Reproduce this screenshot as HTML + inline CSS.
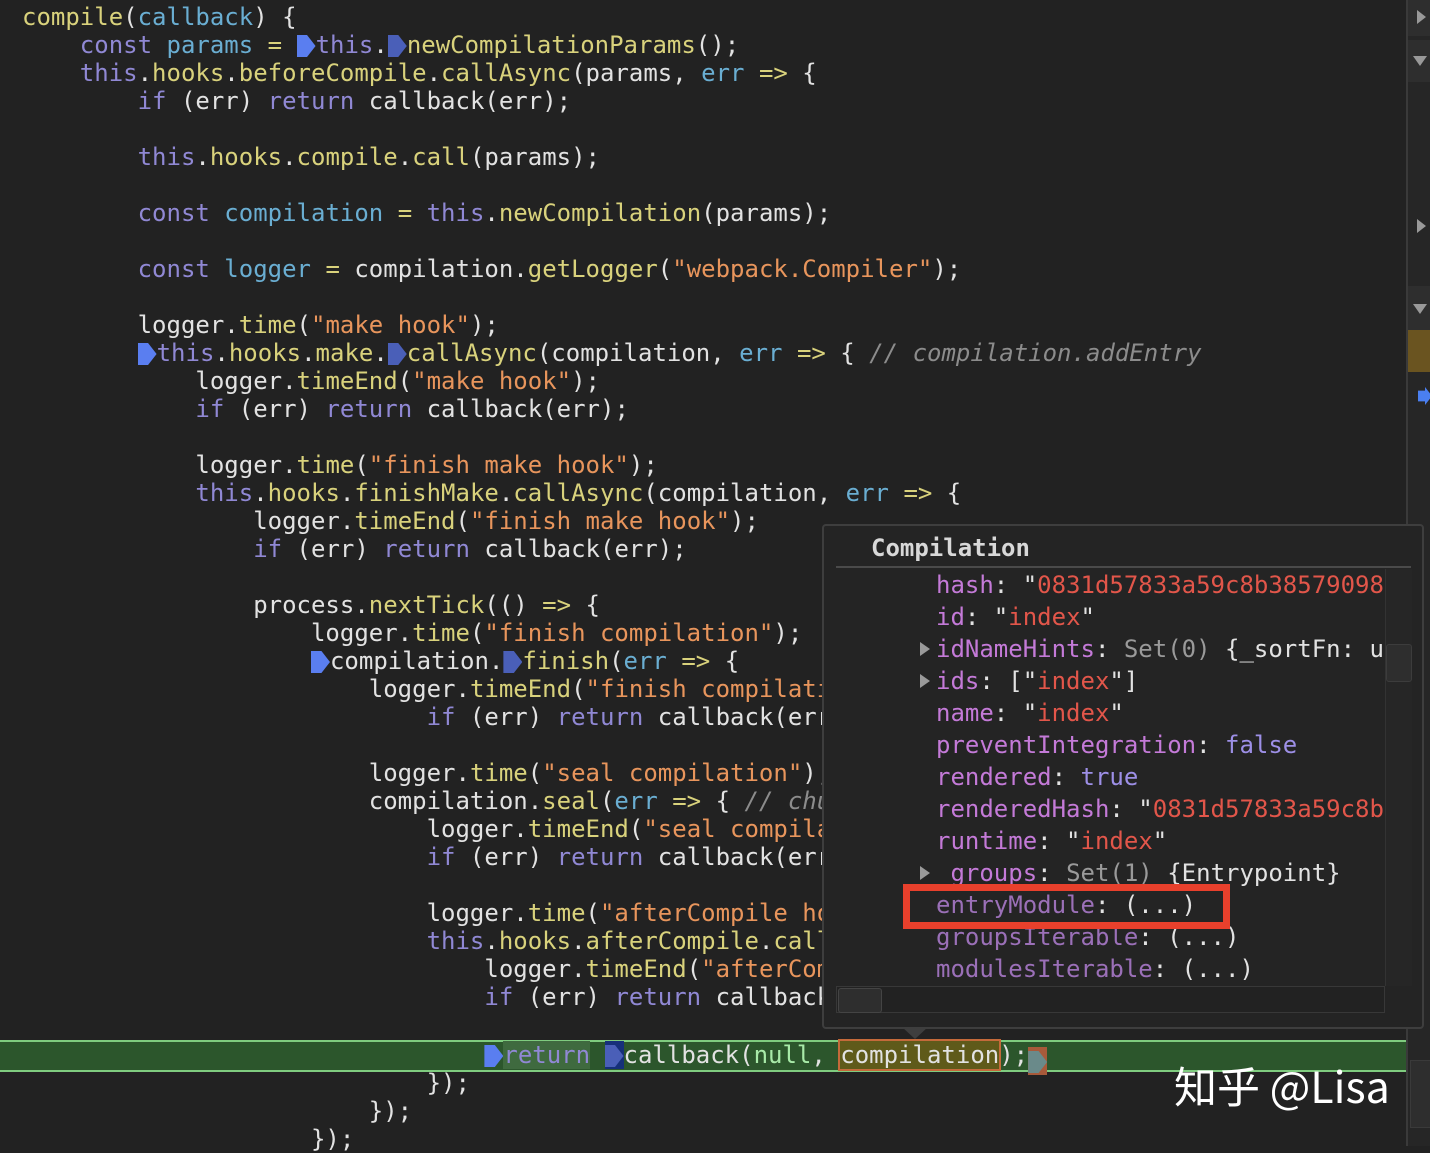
<!DOCTYPE html>
<html><head><meta charset="utf-8"><style>
html,body{margin:0;padding:0}
body{width:1430px;height:1146px;background:#222;position:relative;overflow:hidden;font-family:"DejaVu Sans Mono","Liberation Mono",monospace;font-size:24px;color:#e2e2e2}
.l{position:absolute;left:22px;height:28px;line-height:28px;white-space:pre}
.k{color:#9088d4}.f{color:#d9d27c}.v{color:#6aaed2}.s{color:#e8955c}.c{color:#8c8c8c;font-style:italic}.y{color:#d9d27c}
.m{display:inline-block;width:19px;height:22px;vertical-align:-4px;background:#5a7ef0;clip-path:polygon(0 0,55% 0,100% 50%,55% 100%,0 100%)}
.m2{background:#4a5fb8}
#hl{position:absolute;left:0;top:1040px;width:1406px;height:28px;background:#2c562c;border-top:2px solid #7fcc7f;border-bottom:2px solid #7fcc7f}
#pop{position:absolute;left:822px;top:524px;width:598px;height:501px;background:#242424;border:2px solid #3e3e3e;border-radius:4px;overflow:hidden;z-index:5}
#pop .p{position:absolute;height:32px;line-height:32px;white-space:pre;font-size:24px}
.pk{color:#c47ad8}.pd{color:#9b70b8}.ps{color:#e2564a}.pg{color:#9a9a9a}.pb{color:#9d8fe6}
.tri{position:absolute;width:0;height:0;border-left:10px solid #9a9a9a;border-top:7px solid transparent;border-bottom:7px solid transparent}
#gut{position:absolute;left:1406px;top:0;width:24px;height:1146px;background:#262626;border-left:2px solid #3a3a3a}
</style></head><body>
<div id="hl"></div>
<div class="l" style="top:3px"><span class="f">compile</span>(<span class="v">callback</span>) {</div>
<div class="l" style="top:31px">    <span class="k">const</span> <span class="v">params</span> <span class="y">=</span> <span class="m"></span><span class="k">this</span>.<span class="m m2"></span><span class="f">newCompilationParams</span>();</div>
<div class="l" style="top:59px">    <span class="k">this</span>.<span class="f">hooks</span>.<span class="f">beforeCompile</span>.<span class="f">callAsync</span>(params, <span class="v">err</span> <span class="y">=&gt;</span> {</div>
<div class="l" style="top:87px">        <span class="k">if</span> (err) <span class="k">return</span> callback(err);</div>
<div class="l" style="top:143px">        <span class="k">this</span>.<span class="f">hooks</span>.<span class="f">compile</span>.<span class="f">call</span>(params);</div>
<div class="l" style="top:199px">        <span class="k">const</span> <span class="v">compilation</span> <span class="y">=</span> <span class="k">this</span>.<span class="f">newCompilation</span>(params);</div>
<div class="l" style="top:255px">        <span class="k">const</span> <span class="v">logger</span> <span class="y">=</span> compilation.<span class="f">getLogger</span>(<span class="s">"webpack.Compiler"</span>);</div>
<div class="l" style="top:311px">        logger.<span class="f">time</span>(<span class="s">"make hook"</span>);</div>
<div class="l" style="top:339px">        <span class="m"></span><span class="k">this</span>.<span class="f">hooks</span>.<span class="f">make</span>.<span class="m m2"></span><span class="f">callAsync</span>(compilation, <span class="v">err</span> <span class="y">=&gt;</span> { <span class="c">// compilation.addEntry</span></div>
<div class="l" style="top:367px">            logger.<span class="f">timeEnd</span>(<span class="s">"make hook"</span>);</div>
<div class="l" style="top:395px">            <span class="k">if</span> (err) <span class="k">return</span> callback(err);</div>
<div class="l" style="top:451px">            logger.<span class="f">time</span>(<span class="s">"finish make hook"</span>);</div>
<div class="l" style="top:479px">            <span class="k">this</span>.<span class="f">hooks</span>.<span class="f">finishMake</span>.<span class="f">callAsync</span>(compilation, <span class="v">err</span> <span class="y">=&gt;</span> {</div>
<div class="l" style="top:507px">                logger.<span class="f">timeEnd</span>(<span class="s">"finish make hook"</span>);</div>
<div class="l" style="top:535px">                <span class="k">if</span> (err) <span class="k">return</span> callback(err);</div>
<div class="l" style="top:591px">                process.<span class="f">nextTick</span>(() <span class="y">=&gt;</span> {</div>
<div class="l" style="top:619px">                    logger.<span class="f">time</span>(<span class="s">"finish compilation"</span>);</div>
<div class="l" style="top:647px">                    <span class="m"></span>compilation.<span class="m m2"></span><span class="f">finish</span>(<span class="v">err</span> <span class="y">=&gt;</span> {</div>
<div class="l" style="top:675px">                        logger.<span class="f">timeEnd</span>(<span class="s">"finish compilation"</span>);</div>
<div class="l" style="top:703px">                            <span class="k">if</span> (err) <span class="k">return</span> callback(err);</div>
<div class="l" style="top:759px">                        logger.<span class="f">time</span>(<span class="s">"seal compilation"</span>);</div>
<div class="l" style="top:787px">                        compilation.<span class="f">seal</span>(<span class="v">err</span> <span class="y">=&gt;</span> { <span class="c">// chunk</span></div>
<div class="l" style="top:815px">                            logger.<span class="f">timeEnd</span>(<span class="s">"seal compilation"</span>);</div>
<div class="l" style="top:843px">                            <span class="k">if</span> (err) <span class="k">return</span> callback(err);</div>
<div class="l" style="top:899px">                            logger.<span class="f">time</span>(<span class="s">"afterCompile hook"</span>);</div>
<div class="l" style="top:927px">                            <span class="k">this</span>.<span class="f">hooks</span>.<span class="f">afterCompile</span>.<span class="f">callAsync</span>(</div>
<div class="l" style="top:955px">                                logger.<span class="f">timeEnd</span>(<span class="s">"afterCompile"</span>);</div>
<div class="l" style="top:983px">                                <span class="k">if</span> (err) <span class="k">return</span> callback(err);</div>
<div class="l" style="top:1041px">                                <span class="m"></span><span class="k" style="background:#3f6a3f">return</span> <span style="background:#16307a"><span class="m m2" style="width:19px"></span></span>callback(<span style="color:#a8eaa8">null</span>, <span style="background:#5f5a1a;outline:2px solid #c46a3a">compilation</span>);<span style="display:inline-block;width:19px;height:28px;vertical-align:-6px;background:#a85a3a"><span class="m" style="background:#6a8a8a"></span></span></div>
<div class="l" style="top:1069px">                            });</div>
<div class="l" style="top:1097px">                        });</div>
<div class="l" style="top:1125px">                    });</div>

<div id="gut">
 <div style="position:absolute;left:0;top:0;width:24px;height:36px;background:#2e2e2e"></div>
 <div style="position:absolute;left:0;top:40px;width:24px;height:42px;background:#2e2e2e"></div>
 <div style="position:absolute;left:0;top:286px;width:24px;height:44px;background:#2e2e2e"></div>
 <div style="position:absolute;left:0;top:330px;width:24px;height:42px;background:#6a5420"></div>
 <div style="position:absolute;left:9px;top:10px;border-left:9px solid #999;border-top:7px solid transparent;border-bottom:7px solid transparent"></div>
 <div style="position:absolute;left:5px;top:56px;border-top:10px solid #999;border-left:7px solid transparent;border-right:7px solid transparent"></div>
 <div style="position:absolute;left:9px;top:219px;border-left:9px solid #999;border-top:7px solid transparent;border-bottom:7px solid transparent"></div>
 <div style="position:absolute;left:5px;top:304px;border-top:10px solid #999;border-left:7px solid transparent;border-right:7px solid transparent"></div>
 <div style="position:absolute;left:10px;top:387px;width:14px;height:18px;background:#4a7ff0;clip-path:polygon(0 20%,50% 20%,50% 0,100% 50%,50% 100%,50% 80%,0 80%)"></div>
 <div style="position:absolute;left:2px;top:1060px;width:20px;height:66px;background:#2e2e2e;border:1px solid #3a3a3a"></div>
</div>

<div id="pop">
 <div class="p" style="left:47px;top:6px;font-weight:bold;color:#d8d8d8">Compilation</div>
 <div style="position:absolute;left:12px;top:40px;width:575px;height:2px;background:#4a4a4a"></div>
 <div class="p" style="left:112px;top:43px"><span class="pk">hash</span>: "<span class="ps">0831d57833a59c8b38579098</span></div>
 <div class="p" style="left:112px;top:75px"><span class="pk">id</span>: "<span class="ps">index</span>"</div>
 <div class="tri" style="left:96px;top:116px"></div>
 <div class="p" style="left:112px;top:107px"><span class="pk">idNameHints</span>: <span class="pg">Set(0)</span> {_sortFn: u</div>
 <div class="tri" style="left:96px;top:148px"></div>
 <div class="p" style="left:112px;top:139px"><span class="pk">ids</span>: ["<span class="ps">index</span>"]</div>
 <div class="p" style="left:112px;top:171px"><span class="pk">name</span>: "<span class="ps">index</span>"</div>
 <div class="p" style="left:112px;top:203px"><span class="pk">preventIntegration</span>: <span class="pb">false</span></div>
 <div class="p" style="left:112px;top:235px"><span class="pk">rendered</span>: <span class="pb">true</span></div>
 <div class="p" style="left:112px;top:267px"><span class="pk">renderedHash</span>: "<span class="ps">0831d57833a59c8b</span></div>
 <div class="p" style="left:112px;top:299px"><span class="pk">runtime</span>: "<span class="ps">index</span>"</div>
 <div class="tri" style="left:96px;top:340px"></div>
 <div class="p" style="left:112px;top:331px"> <span class="pk">groups</span>: <span class="pg">Set(1)</span> {Entrypoint}</div>
 <div class="p" style="left:112px;top:363px"><span class="pd">entryModule</span>: (...)</div>
 <div class="p" style="left:112px;top:395px"><span class="pd">groupsIterable</span>: (...)</div>
 <div class="p" style="left:112px;top:427px"><span class="pd">modulesIterable</span>: (...)</div>
 <div style="position:absolute;left:561px;top:43px;width:26px;height:417px;background:#262626;border-left:1px solid #333"></div>
 <div style="position:absolute;left:562px;top:118px;width:24px;height:36px;background:#2e2e2e;border:1px solid #3c3c3c;border-radius:3px"></div>
 <div style="position:absolute;left:12px;top:460px;width:547px;height:25px;background:#222;border:1px solid #383838"></div>
 <div style="position:absolute;left:14px;top:462px;width:42px;height:23px;background:#2e2e2e;border:1px solid #444;border-radius:3px"></div>
</div>
<div style="position:absolute;left:903px;top:884px;width:313px;height:31px;border:7px solid #e8402c;z-index:6"></div>
<div style="position:absolute;left:902px;top:1027px;width:0;height:0;border-left:13px solid transparent;border-right:13px solid transparent;border-top:12px solid #3e3e3e;z-index:6"></div>
<div style="position:absolute;left:1174px;top:1056px;font-family:'Noto Sans CJK SC','Liberation Sans',sans-serif;font-size:43px;color:#fff;white-space:pre;line-height:58px;z-index:7">知乎 @Lisa</div>
</body></html>
